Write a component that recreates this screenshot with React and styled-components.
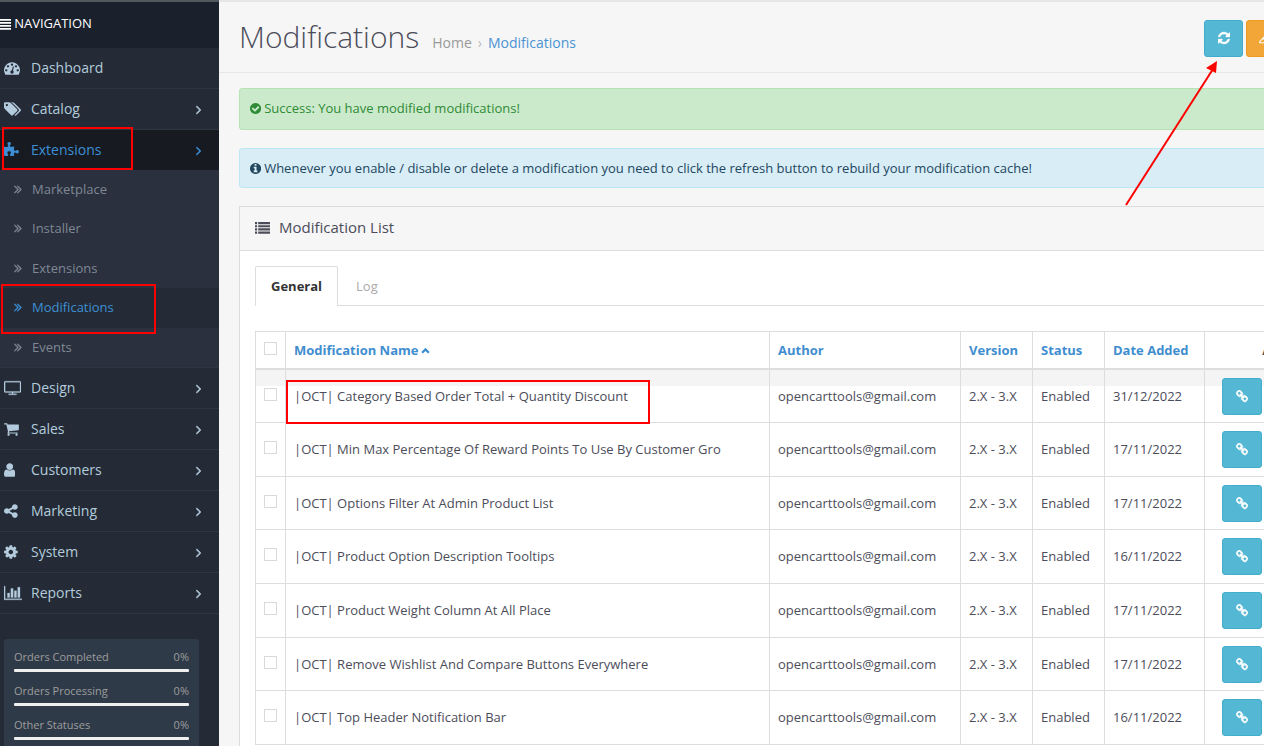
import React from "react";
import styled, { createGlobalStyle, css } from "styled-components";

const GlobalStyle = createGlobalStyle`
  * {
    box-sizing: border-box;
  }
  body {
    margin: 0;
    background: #f6f6f6;
    color: #4c4d5a;
    font-family: "Open Sans", "Noto Sans", sans-serif;
    font-size: 13px;
    line-height: 20px;
    overflow-x: hidden;
  }
  a {
    text-decoration: none;
  }
`;

const Page = styled.div`
  position: relative;
  display: flex;
  min-height: 100vh;
  overflow: hidden;
`;

/* ---------- icons ---------- */

const Svg = styled.svg`
  display: block;
  flex: none;
  fill: currentColor;
  stroke: currentColor;
  height: ${(props) => props.$size}px;
`;

const circle =
  "m252 162q0 209-103 385.5t-279.5 279.5-385.5 103-385.5-103-279.5-279.5-103-385.5 103-385.5 279.5-279.5 385.5-103 385.5 103 279.5 279.5 103 385.5z";

const icons = {
  bars: {
    box: [0, 1536],
    d: "M0 276h1536v250H0zM0 690h1536v250H0zM0 1104h1536v250H0zM0 1518h1536v250H0z",
  },
  dashboard: {
    box: [0, 1792],
    d: "M384 1152q0-53-37.5-90.5t-90.5-37.5-90.5 37.5-37.5 90.5 37.5 90.5 90.5 37.5 90.5-37.5 37.5-90.5zm192-448q0-53-37.5-90.5t-90.5-37.5-90.5 37.5-37.5 90.5 37.5 90.5 90.5 37.5 90.5-37.5 37.5-90.5zm428 481l101-382q6-26-7.5-48.5t-38.5-29.5-48 6.5-30 39.5l-101 382q-60 5-107 43.5t-63 98.5q-20 77 20 146t117 89 146-20 89-117q16-60-6-117t-72-91zm660-33q0-53-37.5-90.5t-90.5-37.5-90.5 37.5-37.5 90.5 37.5 90.5 90.5 37.5 90.5-37.5 37.5-90.5zm-640-640q0-53-37.5-90.5t-90.5-37.5-90.5 37.5-37.5 90.5 37.5 90.5 90.5 37.5 90.5-37.5 37.5-90.5zm448 192q0-53-37.5-90.5t-90.5-37.5-90.5 37.5-37.5 90.5 37.5 90.5 90.5 37.5 90.5-37.5 37.5-90.5zm320 448q0 261-141 483-19 29-54 29h-1402q-35 0-54-29-141-221-141-483 0-182 71-348t191-286 286-191 348-71 348 71 286 191 191 286 71 348z",
  },
  tags: {
    box: [0, 1920],
    d: "M448 448q0-53-37.5-90.5t-90.5-37.5-90.5 37.5-37.5 90.5 37.5 90.5 90.5 37.5 90.5-37.5 37.5-90.5zm1067 576q0 53-37 90l-491 492q-39 37-91 37-53 0-90-37l-715-716q-38-37-64.5-101t-26.5-117v-416q0-52 38-90t90-38h416q53 0 117 26.5t102 64.5l715 714q37 39 37 91zm384 0q0 53-37 90l-491 492q-39 37-91 37-36 0-59-14t-53-45l470-470q37-37 37-90 0-52-37-91l-715-714q-38-38-102-64.5t-117-26.5h224q53 0 117 26.5t102 64.5l715 714q37 39 37 91z",
  },
  puzzle: {
    box: [0, 1792],
    d: "M1664 1098q0 81-44.5 135t-123.5 54q-41 0-77.5-17.5t-59-38-56.5-38-71-17.5q-110 0-110 124 0 39 16 115t15 115v5q-22 0-33 1-34 3-97.5 11.5t-115.5 13.5-98 5q-61 0-103-26.5t-42-83.5q0-37 17.5-71t38-56.5 38-59 17.5-77.5q0-79-54-123.5t-135-44.5q-84 0-143 45.5t-59 127.5q0 43 15 83t33.5 64.5 33.5 53 15 50.5q0 45-46 89-37 35-117 35-95 0-245-24-9-2-27.5-4t-27.5-4l-13-2q-1 0-3-1-2 0-2-1v-1024q2 1 17.5 3.5t34 5 21.5 3.5q150 24 245 24 80 0 117-35 46-44 46-89 0-22-15-50.5t-33.5-53-33.5-64.5-15-83q0-82 59-127.5t144-45.5q80 0 134 44.5t54 123.5q0 41-17.5 77.5t-38 59-38 56.5-17.5 71q0 57 42 83.5t103 26.5q64 0 180-15t163-17v2q-1 2-3.5 17.5t-5 34-3.5 21.5q-24 150-24 245 0 80 35 117 44 46 89 46 22 0 50.5-15t53-33.5 64.5-33.5 83-15q82 0 127.5 59t45.5 143z",
  },
  television: {
    box: [0, 1920],
    weight: 30,
    d: "M1792 1248v-960q0-13-9.5-22.5t-22.5-9.5h-1600q-13 0-22.5 9.5t-9.5 22.5v960q0 13 9.5 22.5t22.5 9.5h1600q13 0 22.5-9.5t9.5-22.5zm128-960v960q0 66-47 113t-113 47h-736v128h352q14 0 23 9t9 23v64q0 14-9 23t-23 9h-832q-14 0-23-9t-9-23v-64q0-14 9-23t23-9h352v-128h-736q-66 0-113-47t-47-113v-960q0-66 47-113t113-47h1600q66 0 113 47t47 113z",
  },
  cart: {
    box: [64, 1728],
    d: "M704 1536q0 52-38 90t-90 38-90-38-38-90 38-90 90-38 90 38 38 90zm896 0q0 52-38 90t-90 38-90-38-38-90 38-90 90-38 90 38 38 90zm128-1088v512q0 24-16.5 42.5t-40.5 21.5l-1044 122q13 60 13 70 0 16-24 64h920q26 0 45 19t19 45-19 45-45 19h-1024q-26 0-45-19t-19-45q0-11 8-31.5t16-36 21.5-40 15.5-29.5l-177-823h-204q-26 0-45-19t-19-45 19-45 45-19h256q16 0 28.5 6.5t19.5 15.5 13 24.5 8 26 5.5 29.5 4.5 26h1201q26 0 45 19t19 45z",
  },
  user: {
    box: [256, 1280],
    d: "M1536 1399q0 109-62.5 187t-150.5 78h-854q-88 0-150.5-78t-62.5-187q0-85 8.5-160.5t31.5-152 58.5-131 94-89 134.5-34.5q131 128 313 128t313-128q76 0 134.5 34.5t94 89 58.5 131 31.5 152 8.5 160.5zm-256-887q0 159-112.5 271.5t-271.5 112.5-271.5-112.5-112.5-271.5 112.5-271.5 271.5-112.5 271.5 112.5 112.5 271.5z",
  },
  share: {
    box: [128, 1536],
    d: "M1344 1024q133 0 226.5 93.5t93.5 226.5-93.5 226.5-226.5 93.5-226.5-93.5-93.5-226.5q0-12 2-34l-360-180q-92 86-218 86-133 0-226.5-93.5t-93.5-226.5 93.5-226.5 226.5-93.5q126 0 218 86l360-180q-2-22-2-34 0-133 93.5-226.5t226.5-93.5 226.5 93.5 93.5 226.5-93.5 226.5-226.5 93.5q-126 0-218-86l-360 180q2 22 2 34t-2 34l360 180q92-86 218-86z",
  },
  cog: {
    box: [128, 1536],
    d: "M1152 896q0-106-75-181t-181-75-181 75-75 181 75 181 181 75 181-75 75-181zm512-109v222q0 12-8 23t-20 13l-185 28q-19 54-39 91 35 50 107 138 10 12 10 25t-9 23q-27 37-99 108t-94 71q-12 0-26-9l-138-108q-44 23-91 38-16 136-29 186-7 28-36 28h-222q-14 0-24.5-8.5t-11.5-21.5l-28-184q-49-16-90-37l-141 107q-10 9-25 9-14 0-25-11-126-114-165-168-7-10-7-23 0-12 8-23 15-21 51-66.5t54-70.5q-27-50-41-99l-183-27q-13-2-21-12.5t-8-23.5v-222q0-12 8-23t19-13l186-28q14-46 39-92-40-57-107-138-10-12-10-24 0-10 9-23 26-36 98.5-107.5t94.5-71.5q13 0 26 10l138 107q44-23 91-38 16-136 29-186 7-28 36-28h222q14 0 24.5 8.5t11.5 21.5l28 184q49 16 90 37l142-107q9-9 24-9 13 0 25 10 129 119 165 170 7 8 7 22 0 12-8 23-15 21-51 66.5t-54 70.5q26 50 41 98l183 28q13 2 21 12.5t8 23.5z",
  },
  chart: {
    box: [0, 2048],
    weight: 30,
    d: "M640 896v512h-256v-512h256zm384-512v1024h-256v-1024h256zm1024 1152v128h-2048v-1536h128v1408h1920zm-640-896v768h-256v-768h256zm384-384v1152h-256v-1152h256z",
  },
  angleRight: {
    box: [576, 640],
    weight: 60,
    d: "M1171 960q0 13-10 23l-466 466q-10 10-23 10t-23-10l-50-50q-10-10-10-23t10-23l393-393-393-393q-10-10-10-23t10-23l50-50q10-10 23-10t23 10l466 466q10 10 10 23z",
  },
  angleDouble: {
    box: [576, 1024],
    weight: 40,
    d: "M1171 960q0 13-10 23l-466 466q-10 10-23 10t-23-10l-50-50q-10-10-10-23t10-23l393-393-393-393q-10-10-10-23t10-23l50-50q10-10 23-10t23 10l466 466q10 10 10 23zM1555 960q0 13-10 23l-466 466q-10 10-23 10t-23-10l-50-50q-10-10-10-23t10-23l393-393-393-393q-10-10-10-23t10-23l50-50q10-10 23-10t23 10l466 466q10 10 10 23z",
  },
  list: {
    box: [0, 1792],
    d: "M0 240h256v260H0zM384 240h1408v260H384zM0 620h256v260H0zM384 620h1408v260H384zM0 1000h256v260H0zM384 1000h1408v260H384zM0 1380h256v260H0zM384 1380h1408v260H384z",
  },
  check: {
    box: [128, 1536],
    d: `M1412 734q0-28-18-46l-91-90q-19-19-45-19t-45 19l-408 407-226-226q-19-19-45-19t-45 19l-91 90q-18 18-18 46 0 27 18 45l362 362q19 19 45 19 27 0 46-19l543-543q18-18 18-45z${circle}`,
  },
  info: {
    box: [128, 1536],
    d: "M1152 1376v-160q0-14-9-23t-23-9h-96v-512q0-14-9-23t-23-9h-320q-14 0-23 9t-9 23v160q0 14 9 23t23 9h96v320h-96q-14 0-23 9t-9 23v160q0 14 9 23t23 9h448q14 0 23-9t9-23zm-128-896v-160q0-14-9-23t-23-9h-192q-14 0-23 9t-9 23v160q0 14 9 23t23 9h192q14 0 23-9t9-23zm640 416q0 209-103 385.5t-279.5 279.5-385.5 103-385.5-103-279.5-279.5-103-385.5 103-385.5 279.5-279.5 385.5-103 385.5 103 279.5 279.5 103 385.5z",
  },
  refresh: {
    box: [128, 1536],
    weight: 40,
    d: "M1639 1056q0 5-1 7-64 268-268 434.5t-478 166.5q-146 0-282.5-55t-243.5-157l-129 129q-19 19-45 19t-45-19-19-45v-448q0-26 19-45t45-19h448q26 0 45 19t19 45-19 45l-137 137q71 66 161 102t187 36q134 0 250-65t186-179q11-17 53-117 8-23 30-23h192q13 0 22.5 9.5t9.5 22.5zm25-800v448q0 26-19 45t-45 19h-448q-26 0-45-19t-19-45 19-45l138-138q-148-137-349-137-134 0-250 65t-186 179q-11 17-53 117-8 23-30 23h-199q-13 0-22.5-9.5t-9.5-22.5v-7q65-268 270-434.5t480-166.5q146 0 284 55.5t245 156.5l130-129q19-19 45-19t45 19 19 45z",
  },
  eraser: {
    box: [0, 1920],
    d: "M896 1408l336-384h-768l-336 384h768zm1013-1077q15 34 9.500 71.500t-30.500 65.500l-896 1024q-38 44-96 44h-768q-38 0-69.500-20.500t-47.500-54.500q-15-34-9.500-71.500t30.500-65.500l896-1024q38-44 96-44h768q38 0 69.500 20.500t47.500 54.500z",
  },
  trash: {
    box: [192, 1408],
    d: "M640 704h128v704H640zM832 704h128v704H832zM1024 704h128v704h-128zM320 512h1152v1088q0 64-64 64H384q-64 0-64-64zM192 384h1408v128H192zM640 256h512v128H640z",
  },
  minus: {
    box: [128, 1536],
    d: "M1344 960v-128q0-26-19-45t-45-19h-768q-26 0-45 19t-19 45v128q0 26 19 45t45 19h768q26 0 45-19t19-45zM1664 896a768 768 0 1 0-1536 0 768 768 0 1 0 1536 0z",
  },
  link: {
    box: [64, 1664],
    weight: 70,
    d: "M1520 1216q0-40-28-68l-208-208q-28-28-68-28-42 0-72 32 3 3 19 18.500t21.500 21.500 15 19 13 25.500 3.500 27.500q0 40-28 68t-68 28q-15 0-27.500-3.500t-25.500-13-19-15-21.500-21.500-18.500-19q-33 31-33 73 0 40 28 68l206 207q27 27 68 27 40 0 68-26l147-146q28-28 28-67zm-703-705q0-40-28-68l-206-207q-28-28-68-28-39 0-68 27l-147 146q-28 28-28 67 0 40 28 68l208 208q27 27 68 27 42 0 72-31-3-3-19-18.500t-21.500-21.500-15-19-13-25.500-3.500-27.500q0-40 28-68t68-28q15 0 27.500 3.500t25.500 13 19 15 21.500 21.500 18.500 19q33-31 33-73zm895 705q0 120-85 203l-147 146q-83 83-203 83-121 0-204-85l-206-207q-83-83-83-203 0-123 88-209l-88-88q-86 88-208 88-120 0-204-84l-208-208q-84-84-84-204t85-203l147-146q83-83 203-83 121 0 204 85l206 207q83 83 83 203 0 123-88 209l88 88q86-88 208-88 120 0 204 84l208 208q84 84 84 204z",
  },
};

const Icon = ({ name, size = 16 }) => {
  const { box, d, weight = 0 } = icons[name];
  return (
    <Svg $size={size} viewBox={`${box[0]} 0 ${box[1]} 1792`} aria-hidden="true">
      <path fillRule="evenodd" strokeWidth={weight} d={d} />
    </Svg>
  );
};

/* ---------- sidebar ---------- */

const Sidebar = styled.aside`
  flex: none;
  width: 219px;
  background: #242b36;
  border-top: 2px solid #50575d;
`;

const NavTitle = styled.div`
  display: flex;
  align-items: center;
  gap: 3px;
  height: 46px;
  padding-bottom: 4px;
  background: #1a212d;
  color: #fff;
  overflow: hidden;
`;

const Menu = styled.ul`
  list-style: none;
  margin: 0;
  padding: 0;
`;

const MenuItem = styled.li`
  border-bottom: ${(props) => (props.$open ? "0" : "1px")} solid #2c3741;
`;

const MenuLink = styled.a`
  display: flex;
  align-items: center;
  height: 40px;
  padding: 0 18px 0 4px;
  font-size: 14px;
  color: #b3cbdd;
  ${(props) =>
    props.$active &&
    css`
      background: #171a21;
      color: #3d8fd5;
    `}
`;

const IconSlot = styled.span`
  width: 27px;
`;

const Label = styled.span`
  flex: 1;
`;

const SubMenu = styled.ul`
  list-style: none;
  margin: 0;
  padding: 0;
  background: #2a303e;
  border-bottom: 1px solid #2c3741;
`;

const SubLink = styled.a`
  display: flex;
  align-items: center;
  gap: 10px;
  height: 39px;
  padding: 0 0 2px 14px;
  color: ${(props) => (props.$active ? "#3d8fd5" : "#7f8894")};
  background: ${(props) => (props.$active ? "#242b36" : "transparent")};
  li:nth-child(even) > & {
    height: 40px;
  }
`;

const Stats = styled.ul`
  list-style: none;
  margin: 25px 20px 0 4px;
  padding: 8px 0;
  border-radius: 3px;
  background: #2f3a48;
`;

const Stat = styled.li`
  padding: 0 10px;
  height: 34px;
  font-size: 11px;
  color: #9d9d9d;
`;

const StatText = styled.div`
  display: flex;
  justify-content: space-between;
  margin-bottom: 2px;
`;

const StatBar = styled.div`
  height: 3px;
  border-radius: 1px;
  background: #efefef;
`;

/* ---------- content ---------- */

const Main = styled.main`
  flex: 1 0 auto;
  width: calc(100% - 219px);
  min-width: 1130px;
  border-top: 2px solid #e6e6e6;
`;

const PageHeader = styled.header`
  display: flex;
  align-items: center;
  justify-content: space-between;
  height: 71px;
  padding: 2px 22px 0 20px;
  border-bottom: 1px solid #e7e7e7;
`;

const Heading = styled.div`
  display: flex;
  align-items: baseline;
  gap: 13px;
  padding-bottom: 2px;
`;

const Title = styled.h1`
  margin: 0;
  font-size: 30px;
  line-height: 40px;
  font-weight: 300;
  color: #4c4d5a;
`;

const Breadcrumb = styled.nav`
  display: flex;
  gap: 6px;
  font-size: 14px;
  color: #bbb;
`;

const Crumb = styled.a`
  color: ${(props) => (props.$current ? "#4a93d3" : "#999")};
`;

const Buttons = styled.div`
  display: flex;
  justify-content: flex-end;
  gap: 3px;
`;

const RowButtons = styled(Buttons)`
  gap: 2px;
  padding-top: 1px;
`;

const tones = {
  info: ["#54b7d3", "#43adcc"],
  warning: ["#f3a638", "#ee9a1e"],
  danger: ["#f56b6b", "#f24545"],
};

const Button = styled.button`
  display: flex;
  align-items: center;
  justify-content: center;
  width: ${(props) => (props.$wide ? "40px" : "39px")};
  height: 37px;
  padding: 0;
  border: 1px solid ${(props) => tones[props.$tone][1]};
  border-radius: 3px;
  background: ${(props) => tones[props.$tone][0]};
  color: #fff;
`;

const Body = styled.div`
  padding: 15px 20px;
`;

const Alert = styled.div`
  display: flex;
  align-items: center;
  gap: 3px;
  padding: ${(props) => (props.$info ? "9px 10px" : "9px 10px 11px")};
  margin-bottom: 18px;
  border: 1px solid ${(props) => (props.$info ? "#bce8f1" : "#b6e2b6")};
  border-radius: 3px;
  background: ${(props) => (props.$info ? "#d9edf7" : "#cbeacb")};
  color: ${(props) => (props.$info ? "#22475e" : "#2f8b35")};
`;

const Panel = styled.section`
  border: 1px solid #dcdcdc;
  background: #fff;
`;

const PanelTitle = styled.h2`
  display: flex;
  align-items: center;
  gap: 9px;
  height: 44px;
  margin: 0;
  padding: 0 15px 3px;
  border-bottom: 1px solid #dcdcdc;
  background: #f6f6f6;
  font-size: 15px;
  font-weight: 400;
  color: #4c4d5a;
`;

const PanelBody = styled.div`
  padding: 15px;
`;

const Tabs = styled.div`
  display: flex;
  gap: 2px;
  margin-bottom: 25px;
  border-bottom: 1px solid #ddd;
`;

const Tab = styled.button`
  height: 40px;
  margin-bottom: -1px;
  padding: 0 15px 2px;
  border: 1px solid ${(props) => (props.$active ? "#ddd" : "transparent")};
  border-bottom: 0;
  border-radius: 2px 2px 0 0;
  background: ${(props) => (props.$active ? "#fff" : "transparent")};
  color: ${(props) => (props.$active ? "#333" : "#aaa")};
  font: inherit;
  font-weight: ${(props) => (props.$active ? 700 : 400)};
`;

const Table = styled.table`
  width: 100%;
  table-layout: fixed;
  border-collapse: separate;
  border-spacing: 0;
  border: solid #ddd;
  border-width: 1px 0 0 1px;
`;

const Col = styled.col`
  width: ${(props) => props.$width};
`;

const Th = styled.th`
  height: 38px;
  padding: 0 8px;
  border: solid #ddd;
  border-width: 0 1px 2px 0;
  text-align: ${(props) => (props.$right ? "right" : "left")};
  font-weight: 700;
`;

const SortLink = styled.a`
  color: #3f8ecf;
`;

const Caret = styled.svg`
  margin-left: 3px;
  width: 9px;
  height: 9px;
  fill: none;
  stroke: currentColor;
  stroke-width: 2;
`;

const Row = styled.tr`
  height: 54px;
  &:first-child,
  &:nth-child(3n) {
    height: 53px;
  }
  /* strip left under the table head */
  &:first-child td {
    background: linear-gradient(#f4f4f4 16px, #fff 16px);
  }
`;

const Td = styled.td`
  padding: 0 8px 1px;
  border: solid #ddd;
  border-width: 0 1px 1px 0;
  white-space: nowrap;
`;

const Check = styled.input`
  appearance: none;
  display: block;
  width: 13px;
  height: 13px;
  margin: 0 0 3px;
  border: 1px solid #d9d9d9;
  background: #fff;
`;

/* ---------- marks drawn over the page ---------- */

const MarkBox = styled.div`
  position: absolute;
  left: ${(props) => props.$x}px;
  top: ${(props) => props.$y}px;
  width: ${(props) => props.$w}px;
  height: ${(props) => props.$h}px;
  border: 2px solid #fe0000;
  pointer-events: none;
`;

const MarkArrow = styled.svg`
  position: absolute;
  left: 1120px;
  top: 56px;
  width: 104px;
  height: 154px;
  pointer-events: none;
`;

const subItems = ["Marketplace", "Installer", "Extensions", "Modifications", "Events"];

const menu = [
  { label: "Dashboard", icon: "dashboard", leaf: true },
  { label: "Catalog", icon: "tags" },
  { label: "Extensions", icon: "puzzle", items: subItems },
  { label: "Design", icon: "television" },
  { label: "Sales", icon: "cart" },
  { label: "Customers", icon: "user" },
  { label: "Marketing", icon: "share" },
  { label: "System", icon: "cog" },
  { label: "Reports", icon: "chart" },
];

const stats = ["Orders Completed", "Orders Processing", "Other Statuses"];

const modifications = [
  ["|OCT| Category Based Order Total + Quantity Discount", "31/12/2022"],
  ["|OCT| Min Max Percentage Of Reward Points To Use By Customer Gro", "17/11/2022"],
  ["|OCT| Options Filter At Admin Product List", "17/11/2022"],
  ["|OCT| Product Option Description Tooltips", "16/11/2022"],
  ["|OCT| Product Weight Column At All Place", "17/11/2022"],
  ["|OCT| Remove Wishlist And Compare Buttons Everywhere", "17/11/2022"],
  ["|OCT| Top Header Notification Bar", "16/11/2022"],
];

const Navigation = () => (
  <Sidebar>
    <NavTitle>
      <Icon name="bars" size={13} />
      NAVIGATION
    </NavTitle>
    <Menu>
      {menu.map(({ label, icon, leaf, items }) => (
        <MenuItem key={label} $open={!!items}>
          <MenuLink href="#" $active={!!items}>
            <IconSlot>
              <Icon name={icon} />
            </IconSlot>
            <Label>{label}</Label>
            {!leaf && <Icon name="angleRight" size={15} />}
          </MenuLink>
          {items && (
            <SubMenu>
              {items.map((item) => (
                <li key={item}>
                  <SubLink href="#" $active={item === "Modifications"}>
                    <Icon name="angleDouble" size={14} />
                    {item}
                  </SubLink>
                </li>
              ))}
            </SubMenu>
          )}
        </MenuItem>
      ))}
    </Menu>
    <Stats>
      {stats.map((stat) => (
        <Stat key={stat}>
          <StatText>
            <span>{stat}</span>
            <span>0%</span>
          </StatText>
          <StatBar />
        </Stat>
      ))}
    </Stats>
  </Sidebar>
);

const ModificationTable = () => (
  <Table>
    <colgroup>
      <Col $width="30px" />
      <Col $width="auto" />
      <Col $width="191px" />
      <Col $width="72px" />
      <Col $width="72px" />
      <Col $width="100px" />
      <Col $width="108px" />
    </colgroup>
    <thead>
      <tr>
        <Th>
          <Check type="checkbox" aria-label="Select all" />
        </Th>
        <Th>
          <SortLink href="#">
            Modification Name
            <Caret viewBox="0 0 8 8" aria-hidden="true">
              <path d="M1 6l3-3 3 3" />
            </Caret>
          </SortLink>
        </Th>
        {["Author", "Version", "Status", "Date Added"].map((name) => (
          <Th key={name}>
            <SortLink href="#">{name}</SortLink>
          </Th>
        ))}
        <Th $right>Action</Th>
      </tr>
    </thead>
    <tbody>
      {modifications.map(([name, date]) => (
        <Row key={name}>
          <Td>
            <Check type="checkbox" aria-label={name} />
          </Td>
          <Td>{name}</Td>
          <Td>opencarttools@gmail.com</Td>
          <Td>2.X - 3.X</Td>
          <Td>Enabled</Td>
          <Td>{date}</Td>
          <Td>
            <RowButtons>
              <Button $wide $tone="info" aria-label="Link">
                <Icon name="link" size={13} />
              </Button>
              <Button $wide $tone="danger" aria-label="Disable">
                <Icon name="minus" size={13} />
              </Button>
            </RowButtons>
          </Td>
        </Row>
      ))}
    </tbody>
  </Table>
);

export default function App() {
  return (
    <>
      <GlobalStyle />
      <Page>
        <Navigation />
        <Main>
          <PageHeader>
            <Heading>
              <Title>Modifications</Title>
              <Breadcrumb>
                <Crumb href="#">Home</Crumb>
                <span>›</span>
                <Crumb href="#" $current>
                  Modifications
                </Crumb>
              </Breadcrumb>
            </Heading>
            <Buttons>
              <Button $tone="info" aria-label="Refresh">
                <Icon name="refresh" size={14} />
              </Button>
              <Button $tone="warning" aria-label="Clear">
                <Icon name="eraser" size={13} />
              </Button>
              <Button $tone="danger" aria-label="Delete">
                <Icon name="trash" size={13} />
              </Button>
            </Buttons>
          </PageHeader>
          <Body>
            <Alert>
              <Icon name="check" size={13} />
              Success: You have modified modifications!
            </Alert>
            <Alert $info>
              <Icon name="info" size={13} />
              Whenever you enable / disable or delete a modification you need to click the
              refresh button to rebuild your modification cache!
            </Alert>
            <Panel>
              <PanelTitle>
                <Icon name="list" size={15} />
                Modification List
              </PanelTitle>
              <PanelBody>
                <Tabs>
                  <Tab $active>General</Tab>
                  <Tab>Log</Tab>
                </Tabs>
                <ModificationTable />
              </PanelBody>
            </Panel>
          </Body>
        </Main>
        <MarkBox $x={2} $y={127} $w={131} $h={43} />
        <MarkBox $x={1} $y={284} $w={155} $h={50} />
        <MarkBox $x={286} $y={380} $w={364} $h={44} />
        <MarkArrow viewBox="1120 56 104 154" aria-hidden="true">
          <path d="M1126 205L1213 69" stroke="#fe0000" strokeWidth="2" />
          <path d="M1217 61L1206 68L1216 73Z" fill="#fe0000" />
        </MarkArrow>
      </Page>
    </>
  );
}
